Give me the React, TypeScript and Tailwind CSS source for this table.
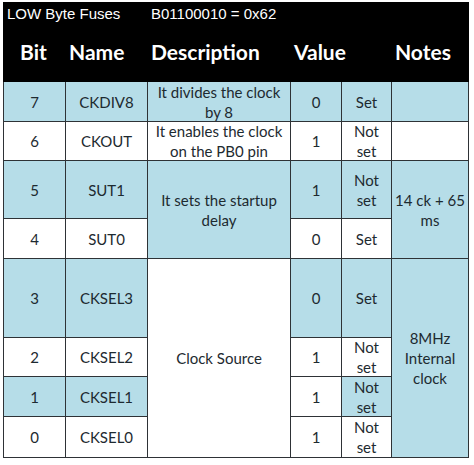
import React from "react";

type Cell = {
  text: React.ReactNode;
  cls: string; // grid placement
  blue?: boolean;
};

const B = "bg-[#b6dde8]";
const W = "bg-white";

const cells: Cell[] = [
  // bit 7
  { text: "7", cls: "col-start-1 row-start-1", blue: true },
  { text: "CKDIV8", cls: "col-start-2 row-start-1", blue: true },
  { text: <>It divides the clock<br />by 8</>, cls: "col-start-3 row-start-1", blue: true },
  { text: "0", cls: "col-start-4 row-start-1", blue: true },
  { text: "Set", cls: "col-start-5 row-start-1", blue: true },
  { text: "", cls: "col-start-6 row-start-1", blue: true },
  // bit 6
  { text: "6", cls: "col-start-1 row-start-2" },
  { text: "CKOUT", cls: "col-start-2 row-start-2" },
  { text: <>It enables the clock<br />on the PB0 pin</>, cls: "col-start-3 row-start-2" },
  { text: "1", cls: "col-start-4 row-start-2" },
  { text: <>Not<br />set</>, cls: "col-start-5 row-start-2" },
  { text: "", cls: "col-start-6 row-start-2" },
  // bit 5
  { text: "5", cls: "col-start-1 row-start-3", blue: true },
  { text: "SUT1", cls: "col-start-2 row-start-3", blue: true },
  { text: <>It sets the startup<br />delay</>, cls: "col-start-3 row-start-3 row-span-2", blue: true },
  { text: "1", cls: "col-start-4 row-start-3", blue: true },
  { text: <>Not<br />set</>, cls: "col-start-5 row-start-3", blue: true },
  { text: <>14 ck + 65<br />ms</>, cls: "col-start-6 row-start-3 row-span-2", blue: true },
  // bit 4
  { text: "4", cls: "col-start-1 row-start-4" },
  { text: "SUT0", cls: "col-start-2 row-start-4" },
  { text: "0", cls: "col-start-4 row-start-4" },
  { text: "Set", cls: "col-start-5 row-start-4" },
  // bit 3
  { text: "3", cls: "col-start-1 row-start-5", blue: true },
  { text: "CKSEL3", cls: "col-start-2 row-start-5", blue: true },
  { text: "Clock Source", cls: "col-start-3 row-start-5 row-span-4" },
  { text: "0", cls: "col-start-4 row-start-5", blue: true },
  { text: "Set", cls: "col-start-5 row-start-5", blue: true },
  { text: <>8MHz<br />Internal<br />clock</>, cls: "col-start-6 row-start-5 row-span-4", blue: true },
  // bit 2
  { text: "2", cls: "col-start-1 row-start-6" },
  { text: "CKSEL2", cls: "col-start-2 row-start-6" },
  { text: "1", cls: "col-start-4 row-start-6" },
  { text: <>Not<br />set</>, cls: "col-start-5 row-start-6" },
  // bit 1
  { text: "1", cls: "col-start-1 row-start-7", blue: true },
  { text: "CKSEL1", cls: "col-start-2 row-start-7", blue: true },
  { text: "1", cls: "col-start-4 row-start-7" },
  { text: <>Not<br />set</>, cls: "col-start-5 row-start-7", blue: true },
  // bit 0
  { text: "0", cls: "col-start-1 row-start-8" },
  { text: "CKSEL0", cls: "col-start-2 row-start-8" },
  { text: "1", cls: "col-start-4 row-start-8" },
  { text: <>Not<br />set</>, cls: "col-start-5 row-start-8" },
];

export default function App() {
  return (
    <div className="w-[474px] h-[465px] bg-white pt-[2px] pl-[3px]">
      <div className="w-[466px]">
        {/* black title + header block */}
        <div className="h-[80px] bg-black text-white flex flex-col">
          <div className="flex h-[22px] items-center font-['Liberation_Sans',Arial,sans-serif] text-[15px] leading-none">
            <span className="pl-[4px] w-[148px]">LOW Byte Fuses</span>
            <span>B01100010 = 0x62</span>
          </div>
          <div className="flex flex-1 items-center pb-[4px] font-['Lato',sans-serif] font-bold text-[21px] leading-none">
            <span className="pl-[17px] w-[66px]">Bit</span>
            <span className="w-[82px]">Name</span>
            <span className="w-[143px]">Description</span>
            <span className="w-[101px]">Value</span>
            <span>Notes</span>
          </div>
        </div>

        {/* table body */}
        <div className="grid grid-cols-[61px_81px_142px_50px_49px_76px] grid-rows-[39px_38px_57px_39px_78px_38px_39px_40px] gap-px bg-[#2e3236] px-px pb-px font-['Lato',sans-serif] text-[15px] leading-[20px] text-[#1d2a30]">
          {cells.map((c, i) => (
            <div
              key={i}
              className={`${c.cls} ${c.blue ? B : W} flex items-center justify-center text-center`}
            >
              <span>{c.text}</span>
            </div>
          ))}
        </div>
      </div>
    </div>
  );
}
